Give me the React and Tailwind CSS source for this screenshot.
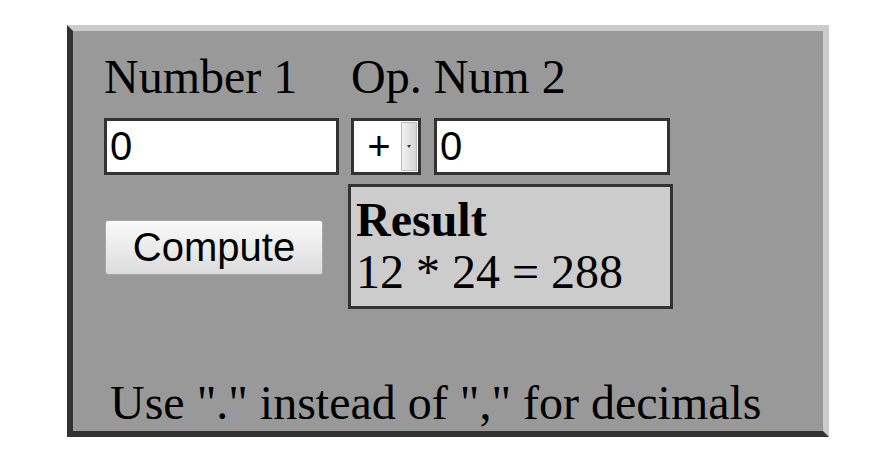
export default function App() {
  return (
    <div className="min-h-[460px] w-[895px] bg-white pt-[25px] pl-[67px]">
      <div className="w-[762px] h-[412px] bg-[#999999] border-[6px] border-t-[#cccccc] border-r-[#cccccc] border-l-[#333333] border-b-[#333333] pl-[31px] pt-[19px] font-['Liberation_Serif',serif] text-black">
        <div className="flex h-[54px] text-[48px] leading-[54px]">
          <span className="w-[247px]">Number 1</span>
          <span>Op. Num 2</span>
        </div>
        <div className="mt-[14px] flex items-start font-['Liberation_Sans',Arial,sans-serif]">
          <div className="w-[235px] h-[57px] bg-white border-[3px] border-[#333333] pl-[3px] text-[40px] leading-[51px]">0</div>
          <div className="ml-[12px] w-[70px] h-[57px] bg-white border-[3px] border-[#333333] flex items-stretch">
            <span className="flex-1 text-center text-[40px] leading-[50px] pl-[3px]">+</span>
            <span className="my-[1px] mr-[1px] w-[16px] border border-[#bbbbbb] bg-gradient-to-r from-[#f2f2f2] to-[#d4d4d4] flex items-center justify-center">
              <span className="w-0 h-0 border-l-[2px] border-r-[2px] border-t-[3px] border-l-transparent border-r-transparent border-t-[#333333]" />
            </span>
          </div>
          <div className="ml-[13px] w-[236px] h-[57px] bg-white border-[3px] border-[#333333] pl-[3px] text-[40px] leading-[51px]">0</div>
        </div>
        <div className="mt-[9px] flex items-start">
          <button className="ml-[1px] mt-[36px] w-[218px] h-[55px] rounded-[3px] border border-[#a8a8a8] bg-gradient-to-b from-[#fafafa] to-[#dcdcdc] font-['Liberation_Sans',Arial,sans-serif] text-[40px] leading-[53px] text-black">
            Compute
          </button>
          <div className="ml-[25px] w-[325px] h-[125px] bg-[#cccccc] border-[3px] border-[#333333] pl-[5px] pt-[10px] text-[48px]">
            <div className="font-bold leading-[46px]">Result</div>
            <div className="leading-[58px]">12 * 24 = 288</div>
          </div>
        </div>
        <div className="mt-[67px] pl-[6px] text-[48px] leading-[54px]">Use "." instead of "," for decimals</div>
      </div>
    </div>
  )
}
